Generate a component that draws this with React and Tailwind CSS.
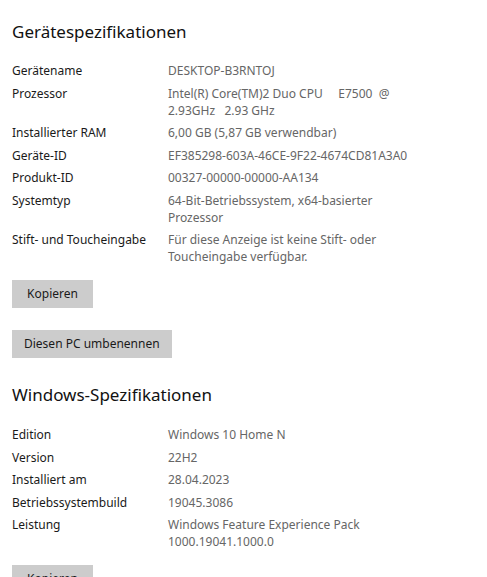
const deviceSpecs = [
  { label: "Gerätename", value: ["DESKTOP-B3RNTOJ"] },
  {
    label: "Prozessor",
    value: ["Intel(R) Core(TM)2 Duo CPU     E7500  @", "2.93GHz   2.93 GHz"],
  },
  { label: "Installierter RAM", value: ["6,00 GB (5,87 GB verwendbar)"] },
  { label: "Geräte-ID", value: ["EF385298-603A-46CE-9F22-4674CD81A3A0"] },
  { label: "Produkt-ID", value: ["00327-00000-00000-AA134"] },
  {
    label: "Systemtyp",
    value: ["64-Bit-Betriebssystem, x64-basierter", "Prozessor"],
  },
  {
    label: "Stift- und Toucheingabe",
    value: ["Für diese Anzeige ist keine Stift- oder", "Toucheingabe verfügbar."],
  },
];

const windowsSpecs = [
  { label: "Edition", value: ["Windows 10 Home N"] },
  { label: "Version", value: ["22H2"] },
  { label: "Installiert am", value: ["28.04.2023"] },
  { label: "Betriebssystembuild", value: ["19045.3086"] },
  {
    label: "Leistung",
    value: ["Windows Feature Experience Pack", "1000.19041.1000.0"],
  },
];

function SpecList({ rows }) {
  return (
    <div className="flex flex-col gap-[5.5px]">
      {rows.map((row) => (
        <div key={row.label} className="grid grid-cols-[156px_1fr] text-[12px] leading-[17px]">
          <span className="text-[#1a1a1a]">{row.label}</span>
          <span className="whitespace-pre text-[#666666]">
            {row.value.map((line, i) => (
              <span key={i} className="block">
                {line}
              </span>
            ))}
          </span>
        </div>
      ))}
    </div>
  );
}

function GrayButton({ children }) {
  return (
    <button className="h-[28px] min-w-[81px] bg-[#cccccc] px-3 text-center text-[12px] text-[#1a1a1a]">
      {children}
    </button>
  );
}

export default function App() {
  return (
    <div
      className="h-[577px] w-[487px] overflow-hidden bg-white px-3 pt-[20px]"
      style={{ fontFamily: '"Noto Sans", "Open Sans", sans-serif' }}
    >
      <h1 className="text-[17px] leading-[24px] text-[#111111]">Gerätespezifikationen</h1>
      <div className="mt-[18px]">
        <SpecList rows={deviceSpecs} />
      </div>
      <div className="mt-[15px] flex flex-col items-start gap-[22px]">
        <GrayButton>Kopieren</GrayButton>
        <GrayButton>Diesen PC umbenennen</GrayButton>
      </div>
      <h2 className="mt-[25px] text-[17px] leading-[24px] text-[#111111]">Windows-Spezifikationen</h2>
      <div className="mt-[19px]">
        <SpecList rows={windowsSpecs} />
      </div>
      <div className="mt-[15px] flex flex-col items-start">
        <GrayButton>Kopieren</GrayButton>
      </div>
    </div>
  );
}
